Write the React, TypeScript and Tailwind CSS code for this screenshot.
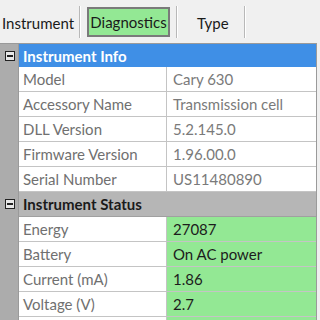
const INFO: [string, string][] = [
  ['Model', 'Cary 630'],
  ['Accessory Name', 'Transmission cell'],
  ['DLL Version', '5.2.145.0'],
  ['Firmware Version', '1.96.00.0'],
  ['Serial Number', 'US11480890']
]

const STATUS: [string, string][] = [
  ['Energy', '27087'],
  ['Battery', 'On AC power'],
  ['Current (mA)', '1.86'],
  ['Voltage (V)', '2.7'],
  ['', '']
]

function Minus() {
  return (
    <div className="w-[10px] h-[10px] border border-[#222] bg-[#e8e8e8] flex items-center justify-center">
      <div className="w-[6px] h-[2px] bg-[#222]" />
    </div>
  )
}

function Sep() {
  return <div className="w-[2px] h-[32px] border-l border-[#b8b8b8] bg-white" />
}

function Row({ label, value, green }: { label: string; value: string; green?: boolean }) {
  return (
    <div className="flex h-[25px] border-b border-[#c4c4c4]">
      <div className="w-[148px] shrink-0 bg-white pl-[4px] pt-[1px] flex items-center text-[#707070] border-r border-[#c4c4c4]">{label}</div>
      <div className={`flex-1 pl-[6px] pt-[1px] flex items-center ${green ? 'bg-[#93e894] text-[#1c1c1c]' : 'bg-white text-[#7a7a7a]'}`}>{value}</div>
    </div>
  )
}

export default function App() {
  return (
    <div className="w-[320px] h-[320px] overflow-hidden bg-[#f0f0f0] text-[15px] leading-none" style={{ fontFamily: 'Lato, "Liberation Sans", sans-serif' }}>
      <div className="h-[43px] flex items-center">
        <div className="w-[79px] pl-[2px] pt-[3px] text-[#1a1a1a]">Instrument</div>
        <Sep />
        <div className="ml-[6px] w-[83px] h-[30px] border-2 border-[#7a7a7a] bg-[#93e894] flex items-center justify-center pt-[2px] text-[#1a1a1a]">Diagnostics</div>
        <div className="ml-[6px]"><Sep /></div>
        <div className="w-[66px] pl-[19px] pt-[3px] text-[#1a1a1a]">Type</div>
        <Sep />
      </div>
      <div className="flex w-[317px] border-t border-r border-[#9a9a9a]">
        <div className="w-[19px] shrink-0 bg-[#acacac] border-r border-[#9a9a9a]" />
        <div className="flex-1 flex flex-col">
          <div className="h-[23px] bg-[#3f8fe6] text-white font-bold pl-[4px] pt-[1px] flex items-center relative">
            <div className="absolute left-[-14px] top-[7px]"><Minus /></div>
            Instrument Info
          </div>
          {INFO.map(([l, v]) => (
            <Row key={l} label={l} value={v} />
          ))}
          <div className="h-[25px] bg-[#b6b6b6] text-[#1a1a1a] font-bold pl-[4px] pt-[1px] flex items-center relative border-b border-[#a0a0a0]">
            <div className="absolute left-[-14px] top-[7px]"><Minus /></div>
            Instrument Status
          </div>
          {STATUS.map(([l, v], i) => (
            <Row key={i} label={l} value={v} green />
          ))}
        </div>
      </div>
    </div>
  )
}
